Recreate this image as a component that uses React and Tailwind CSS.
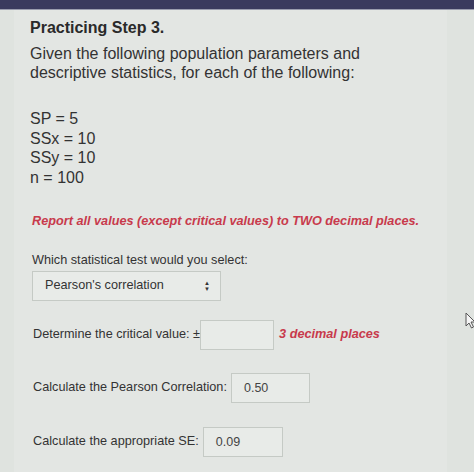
function Field({ value, width }) {
  return (
    <div
      className={`flex h-[30px] items-center border border-[#c5cac5] bg-[#e8ebe8] px-3 text-[12.5px] text-[#444] ${width}`}
    >
      {value}
    </div>
  );
}

export default function App() {
  return (
    <div className="relative h-[472px] w-[474px] overflow-hidden bg-[#dfe3df] font-['Liberation_Sans',Arial,sans-serif] text-[#333]">
      <div className="h-[9px] bg-[#3a3a5e]" />
      <div className="h-px bg-[#9a9cae]" />
      <div className="ml-[14px] mr-[27px] h-[462px] bg-[#e3e6e3] pl-4 pt-[8px]">
        <h1 className="text-[16px] font-bold leading-[20px] text-[#2a2a2a]">Practicing Step 3.</h1>
        <p className="mt-[6px] text-[16px] leading-[19px]">
          Given the following population parameters and
          <br />
          descriptive statistics, for each of the following:
        </p>
        <div className="mt-[27px] text-[16px] leading-[19.5px]">
          <div>SP = 5</div>
          <div>SSx = 10</div>
          <div>SSy = 10</div>
          <div>n = 100</div>
        </div>
        <p className="mt-[25px] pl-[2px] text-[12.7px] font-bold italic leading-[18px] text-[#c83a4c]">
          Report all values (except critical values) to TWO decimal places.
        </p>
        <p className="mt-[21px] pl-[2px] text-[12.7px] leading-[18px]">Which statistical test would you select:</p>
        <div className="ml-[2px] mt-[2px] flex h-[30px] w-[189px] items-center justify-between border border-[#c5cac5] bg-[#e8ebe8] pl-3 pr-[10px] text-[12.7px]">
          <span>Pearson's correlation</span>
          <span className="text-[6px] leading-[6px]">&#9650;<br />&#9660;</span>
        </div>
        <div className="mt-[19px] flex items-center pl-[3px] text-[12.7px]">
          <span>Determine the critical value: ±</span>
          <Field value="" width="w-[74px]" />
          <span className="ml-[5px] font-bold italic text-[#c83a4c]">3 decimal places</span>
        </div>
        <div className="mt-[23px] flex items-center pl-[3px] text-[12.7px]">
          <span className="mr-[4px]">Calculate the Pearson Correlation:</span>
          <Field value="0.50" width="w-[79px]" />
        </div>
        <div className="mt-[24px] flex items-center pl-[3px] text-[12.7px]">
          <span className="mr-[4px]">Calculate the appropriate SE:</span>
          <Field value="0.09" width="w-[80px]" />
        </div>
      </div>
      <svg className="absolute left-[465px] top-[312px]" width="12" height="18" viewBox="0 0 12 18">
        <path d="M1 1 L1 14 L4 11 L6.5 16 L8.5 15 L6 10 L10 10 Z" fill="#f5f5f5" stroke="#555" strokeWidth="1" />
      </svg>
    </div>
  );
}
